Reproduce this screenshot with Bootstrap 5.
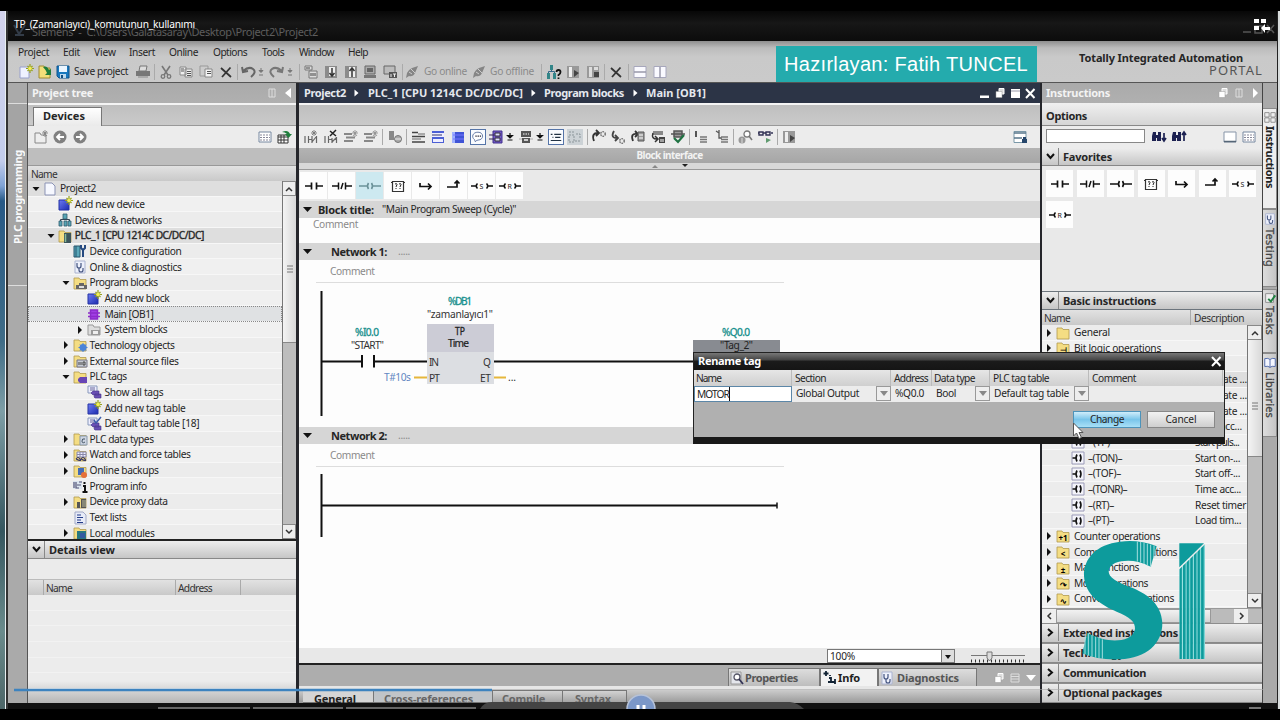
<!DOCTYPE html>
<html lang="en">
<head>
<meta charset="utf-8">
<meta name="viewport" content="width=device-width, initial-scale=1">
<title>TIA Portal - Project2</title>
<link href="https://cdn.jsdelivr.net/npm/bootstrap@5.3.0/dist/css/bootstrap.min.css" rel="stylesheet">
<style>
body{width:1280px;height:720px;overflow:hidden;background:#000;font-family:"Noto Sans","Open Sans",sans-serif;font-size:10.2px;line-height:15px;color:#262626}
span,b{white-space:nowrap}
svg{flex:none;display:block}
.ic{width:16px;height:16px}
.screen{height:698px;margin-top:11px}
.screen .caption-bar,.screen .strip,.screen .tools,.screen .acc,.title-bar,.top-menu,.taskline,.col-head,.tree{flex-shrink:0}
.desk{width:5px;background:linear-gradient(#d3d3ec,#c3cdec 150px,#7fa3d6 175px,#275986 190px,#3f6c87 330px,#7e9ea6 400px,#35565f 520px,#6a8b8c 620px,#4d6668)}
.frame-l{width:3px;background:linear-gradient(90deg,#e8eef0 0 1px,#333 1px)}
.frame-r{width:3px;background:linear-gradient(90deg,#222 0 1px,#d8dcdc 1px)}
.title-bar{height:30px;background:linear-gradient(#070707,#171717 12px,#0c0c0c);color:#5d5d5d;font-size:11px}
.top-menu{height:42px;background:linear-gradient(#8f8f8f,#bcbcbc 7px,#c9c9c9 16px,#cacaca);border-bottom:1px solid #555}
.menu-row{height:21px;line-height:22px}
.credit{left:776px;top:46px;width:261px;height:36px;background:#24abad;color:#fff;font:20px/36px "Liberation Sans",Arial,sans-serif;padding-left:8px}
.side-l{width:20px;background:#aaa;border-right:1px solid #555}
.side-l .slot{height:183px;margin-top:20px;border-top:1px solid #ddd;border-bottom:1px solid #ddd;background:#a4a4a4}
.vert{writing-mode:vertical-rl;line-height:14px}
.flip{transform:rotate(180deg)}
.proj{width:268px}
.vline{width:3px;background:#25262b}
.caption-bar{height:20px;background:linear-gradient(#aaa,#b0b0b0);color:#f3f3f3;font-weight:700;line-height:20px;font-size:11px}
.caption-bar.dark{background:#2c3446;color:#e5e8ee}
.strip{height:23px;border-top:2px solid #f4f4f4;background:linear-gradient(#bfbfbf,#cacaca);border-bottom:1px solid #999}
.dev-tab{width:69px;height:19px;margin-left:5px;border:1px solid #777;border-bottom:0;background:linear-gradient(#fff,#eaeaea);line-height:16px;font-size:11px;margin-bottom:-1px;padding-right:7px}
.tools{height:22px;background:#ececec}
.spacer-bar{height:18px;background:#bebebe;border-bottom:1px solid #999}
.col-head{height:15px;background:linear-gradient(#e2e2e2,#c9c9c9);color:#333;line-height:16px}
.tree{height:358px;background:#f0f0f0}
.tree-row{height:15.66px;line-height:15px;border-bottom:1px solid #f7f7f7;padding-top:1px}
.tree-row:nth-child(odd){background:#ececec}
.tree-row.hd{background:#dedede!important}
.tree-row.sel{background:#dfe1e3!important;outline:1px dotted #888;outline-offset:-1px}
.scr{width:14px;background:#bdbdbd;border-left:1px solid #777}
.scr .sb{height:15px;background:#eee;border:1px solid #888;border-left:0;display:flex;align-items:center;justify-content:center}
.scr .th{background:linear-gradient(90deg,#f4f4f4,#d8d8d8);border-bottom:1px solid #888;display:flex;align-items:center;justify-content:center}
.acc{height:18px;background:linear-gradient(#ededed,#c6c6c6);border-bottom:1px solid #888;font-weight:700;font-size:11px;line-height:18px}
.acc .chev{width:17px;height:17px;border-right:1px solid #888;display:flex;align-items:center;justify-content:center;margin-right:4px;flex:none}
.details{background:linear-gradient(#ececec 0 86px,#b5b5b5 108px)}
.editor{width:741px;background:#fdfdfd}
.bi{height:15px;background:linear-gradient(#b3b3b3,#a6a6a6);color:#f2f2f2;line-height:15px;font-size:10px;font-weight:700}
.fav{background:#e9e9e9}
.fav-cell{width:27px;height:27px;background:#fdfdfd;display:flex;align-items:center;justify-content:center}
.fav-cell.on{background:#cde9f0}
.net{height:17px;background:#d6d6d6;font-weight:700;line-height:17px;font-size:11px}
.net .fw-normal{font-size:10.2px}
.faint{color:#8a8a8a}
.instr{width:220px}
.side-r{width:15px;background:#aaa;border-left:1px solid #444}
.side-r .vert{font-size:11px}
.vtab{background:linear-gradient(90deg,#ddd,#c5c5c5);border:1px solid #8a8a8a;border-left:0;color:#444}
.vtab.on{background:#eee;color:#222}
.ibtn{border:1px solid #5574a8;background:#fafcff}
.insp{height:38px;background:#adadad;font-size:11px}
.itab{height:18px;background:linear-gradient(#ddd,#bdbdbd);border:1px solid #777;border-bottom:0;color:#555;font-weight:700;line-height:17px}
.itab.on{background:#f2f2f2;color:#222}
.subtabs{height:17px;border-top:4px solid #e6e6e6;background:linear-gradient(#ccc,#999);overflow:hidden}
.stab{height:13px;border:1px solid #777;border-left:0;background:linear-gradient(#d2d2d2,#a5a5a5);font-weight:700;color:#666;line-height:15px}
.taskline{height:6px;background:#111}
.dlg{left:693px;top:352px;width:532px;height:92px;background:#b0b0b0;border:1px solid #222;border-bottom:7px solid #191919}
.dlg-title{height:17px;background:linear-gradient(#777,#444 7px,#1b1b1b 8px,#151515);color:#fff;font-weight:700;line-height:16px;font-size:11px}
.dlg-head{height:16px;background:linear-gradient(#e6e6e6,#cfcfcf);line-height:16px}
.dlg-head>div{border-right:1px solid #bbb}
.dlg-row{height:16px;background:#ececec;line-height:15px}
.dd{width:15px;height:15px;border:1px solid #999;background:#eee;display:flex;align-items:center;justify-content:center}
.in{background:#fff;border:1px solid #5c87a8}
.dbtn{width:68px;height:17px;border:1px solid #888;background:linear-gradient(#f2f2f2,#cfcfcf);line-height:15px;text-align:center}
.dbtn.pri{background:linear-gradient(#cfedfb,#79c5ea 50%,#a9e0f7);border-color:#4d93ba}
.ov{pointer-events:none}
</style>
</head>
<body class="position-relative">
<svg width="0" height="0" class="position-absolute"><defs>
<linearGradient id="gb" x1="0" x2="1" y1="0" y2="1"><stop stop-color="#6d7cf0"/><stop offset="1" stop-color="#1c2bb0"/></linearGradient>
<symbol id="page" viewBox="0 0 16 16"><path d="M3 2h7l3 3v9H3z" fill="#f6f8ff" stroke="#8b93b5"/></symbol>
<symbol id="star" viewBox="0 0 16 16"><path d="M12 0v9M8 4.500h8M9.500 2l5 5M14.500 2l-5 5" stroke="#98a21d" stroke-width="1.200"/><circle cx="12" cy="4.500" r="1.800" fill="#f2ee55"/></symbol>
<symbol id="newp" viewBox="0 0 16 16"><path d="M2 3h9v11H2z" fill="#eef1ff" stroke="#98a0cc"/><use href="#star"/></symbol>
<symbol id="open" viewBox="0 0 16 16"><path d="M2 2h5l1 2h5v10H2z" fill="#f3df79" stroke="#a08c34"/><path d="M6 3q4-2 6 3l2-1v6H8l2-2Q9 6 6 3" fill="#1f7d3c"/></symbol>
<symbol id="save" viewBox="0 0 16 16"><path d="M2 2h12v12H4l-2-2z" fill="#1878be" stroke="#0f558d"/><path d="M4 2h8v6H4z" fill="#eaf5ff"/><path d="M5 10h6v4H5z" fill="#bcd9ee"/><path d="M6 11h2v3H6z" fill="#114d80"/></symbol>
<symbol id="print" viewBox="0 0 16 16"><path d="M5 2h7l-1 5H4z" fill="#ddd" stroke="#777"/><path d="M1 7h14v5H1z" fill="#777"/><path d="M3 12h10v2H3z" fill="#aaa"/></symbol>
<symbol id="cut" viewBox="0 0 16 16"><path d="M4 2l6 9M12 2l-6 9" stroke="#777" stroke-width="1.600"/><circle cx="5" cy="12.500" r="1.800" fill="none" stroke="#777" stroke-width="1.300"/><circle cx="11" cy="12.500" r="1.800" fill="none" stroke="#777" stroke-width="1.300"/></symbol>
<symbol id="copy" viewBox="0 0 16 16"><path d="M2 3h6v8H2zM7 5h7v8H7z" fill="#eee" stroke="#888"/><path d="M3 5h3M3 7h3M9 7.500h4M9 9.500h4M9 11.500h4" stroke="#555"/></symbol>
<symbol id="paste" viewBox="0 0 16 16"><path d="M2 2h8v10H2z" fill="#ccc" stroke="#999"/><path d="M7 5h7v8H7z" fill="#f4f4f4" stroke="#888"/><path d="M9 7.500h4M9 9.500h4" stroke="#555"/></symbol>
<symbol id="del" viewBox="0 0 16 16"><path d="M3 4l10 9M12.500 3.500L4 13" stroke="#333" stroke-width="1.800"/></symbol>
<symbol id="undo" viewBox="0 0 16 16"><path d="M2 3l1 5 5-1M3 7q6-5 10-2t-2 8" fill="none" stroke="#666" stroke-width="2"/></symbol>
<symbol id="redo" viewBox="0 0 16 16"><path d="M14 3l-1 5-5-1M13 7Q7 2 3 5t2 8" fill="none" stroke="#777" stroke-width="2"/></symbol>
<symbol id="dn" viewBox="0 0 16 16"><path d="M8 4v4M5.500 6.500L8 9l2.500-2.500zM5.500 11h5" stroke="#111" fill="#111" stroke-width="1.200"/></symbol>
<symbol id="dng" viewBox="0 0 16 16"><path d="M8 4v4M6 6.500L8 8.500l2-2zM6 11h4" stroke="#777" fill="#777"/></symbol>
<symbol id="comp" viewBox="0 0 16 16"><path d="M2 2h7v4H2zM6 7h8v7H6z" fill="#ddd" stroke="#777"/><path d="M3 4h4M8 9v3M10 9v3M12 9v3" stroke="#444"/></symbol>
<symbol id="down" viewBox="0 0 16 16"><path d="M2 2h12v12H2z" fill="#8b8b8b"/><path d="M6 3h6v9H6z" fill="#eee"/><path d="M9 4v7M6.500 9L9 12l2.500-3" stroke="#333" fill="none" stroke-width="1.500"/></symbol>
<symbol id="up" viewBox="0 0 16 16"><path d="M2 2h12v12H2z" fill="#8b8b8b"/><path d="M6 3h6v10H6z" fill="#eee"/><path d="M9 13V5M6.500 7L9 4l2.500 3" stroke="#333" fill="none" stroke-width="1.500"/></symbol>
<symbol id="sim" viewBox="0 0 16 16"><path d="M3 2h10v8H3z" fill="#aaa" stroke="#666"/><path d="M5 4h6v4H5z" fill="#666"/><path d="M2 11h12v3H2z" fill="#777"/></symbol>
<symbol id="rt" viewBox="0 0 16 16"><path d="M2 2h11v8H2z" fill="#bbb" stroke="#666"/><path d="M7 8h8v6H7z" fill="#555"/><path d="M9 10v3M11 10h3M12.500 10v3" stroke="#eee"/></symbol>
<symbol id="plug" viewBox="0 0 16 16"><path d="M2 14l1-5q1-3 5-5l6-2-3 7q-2 4-6 3z" fill="#858585"/><path d="M7 5l4 4M5 8l3 2" stroke="#ccc"/></symbol>
<symbol id="acc" viewBox="0 0 16 16"><path d="M4 1h3v5H4zM1 9h3v6H1zM7 9h3v6H7z" fill="#328588"/><path d="M5.500 6v2M2.500 9V7.500h6V9" stroke="#368" fill="none"/><path d="M10.500 8q0-2 2-2t2 2-2 3v1M12.500 13.500V15" stroke="#111" fill="none" stroke-width="1.800"/></symbol>
<symbol id="win" viewBox="0 0 16 16"><path d="M2 2h12v12H2z" fill="#999"/><path d="M4 3h3v10H4z" fill="#eee"/><path d="M9 6l5 3-5 4z" fill="#444"/></symbol>
<symbol id="win2" viewBox="0 0 16 16"><path d="M2 2h12v12H2z" fill="#999"/><path d="M4 3h3v10H4zM9 3h4v3H9z" fill="#ddd"/><path d="M9 8h5v5H9z" fill="#444"/></symbol>
<symbol id="sph" viewBox="0 0 16 16"><path d="M2 2.500h12v11H2z" fill="#fafaff" stroke="#a7a7bc"/><path d="M2 8h12" stroke="#99a" stroke-width="1.500"/></symbol>
<symbol id="spv" viewBox="0 0 16 16"><path d="M2 2.500h12v11H2z" fill="#fafaff" stroke="#a7a7bc"/><path d="M8 3v11" stroke="#99a" stroke-width="1.500"/></symbol>
<symbol id="grid" viewBox="0 0 16 16"><path d="M2 3h12v10H2z" fill="#fff" stroke="#7788a0"/><path d="M3 6h10M3 8.500h10M3 11h10" stroke="#889" stroke-dasharray="2 1"/></symbol>
<symbol id="pane" viewBox="0 0 16 16"><path d="M2 3h12v10H2z" fill="#fff" stroke="#8795a8"/><path d="M2 12.500h12" stroke="#567" stroke-width="1.500"/></symbol>
<symbol id="paned" viewBox="0 0 16 16"><path d="M2 2.500h12v11H2z" fill="#fff" stroke="#7a98a8"/><path d="M2 4h12M2 9h8" stroke="#57768a" stroke-width="1.500"/><path d="M10 10h5v4h-5zM11 8h3v2h-3z" fill="#26466b"/></symbol>
<symbol id="exp" viewBox="0 0 16 16"><path d="M2 6h10v8H2z" fill="#fff" stroke="#333"/><path d="M2 8h10M2 11h10M5 6v8M8 6v8" stroke="#333"/><path d="M6 3q6-3 8 2h2l-3.500 4L9 5h2Q9 3 6 3" fill="#1f7d3c"/></symbol>
<symbol id="newg" viewBox="0 0 16 16"><path d="M2 4h5l1 2h5v8H2z" fill="#eee" stroke="#888"/><path d="M12 1v7M9 4h6M10 2l4 5M14 2l-4 5" stroke="#777" stroke-width=".8"/></symbol>
<symbol id="back" viewBox="0 0 16 16"><circle cx="8" cy="8" r="6.500" fill="#808080"/><path d="M12 8H5M8 5L5 8l3 3" stroke="#fff" stroke-width="1.800" fill="none"/></symbol>
<symbol id="fwd" viewBox="0 0 16 16"><circle cx="8" cy="8" r="6.500" fill="#808080"/><path d="M4 8h7M8 5l3 3-3 3" stroke="#fff" stroke-width="1.800" fill="none"/></symbol>
<symbol id="add" viewBox="0 0 16 16"><path d="M2 4h10v10H2z" fill="url(#gb)" stroke="#2433a5"/><use href="#star"/></symbol>
<symbol id="neti" viewBox="0 0 16 16"><path d="M6 2h4v5H6zM2 9h3v5H2zM7 9h3v5H7zM11 9h3v5h-3z" fill="#59a5b5" stroke="#345e70" stroke-width=".8"/><path d="M3.500 9V7.500h9V9" fill="none" stroke="#345"/></symbol>
<symbol id="fold" viewBox="0 0 16 16"><path d="M2 3h5l1 1.500h6V14H2z" fill="#f4dd83" stroke="#b19a4e" stroke-width=".8"/></symbol>
<symbol id="plc" viewBox="0 0 16 16"><use href="#fold"/><path d="M7 5h7v10H7z" fill="#3c555b"/><path d="M8.500 6v8" stroke="#8b9" stroke-width="1.500"/></symbol>
<symbol id="cfg" viewBox="0 0 16 16"><path d="M2 3h6v11H2z" fill="#5aa8ba" stroke="#27576e"/><path d="M4 3v11" stroke="#27576e"/><path d="M9 2v3l2 2v7M13 2v3l-2 2" stroke="#264a80" stroke-width="2" fill="none"/></symbol>
<symbol id="diag" viewBox="0 0 16 16"><path d="M3 2h10v12H3z" fill="#edf0fb" stroke="#aab3d0"/><path d="M5 4v3q0 2 2 2t2-2V4M7 9v2q0 2 2 2t2-2V9" fill="none" stroke="#445580" stroke-width="1.200"/></symbol>
<symbol id="fpb" viewBox="0 0 16 16"><use href="#fold"/><path d="M4 10h11v4H4zM7 8h5v2H7z" fill="#666"/><path d="M7 11h5v2H7z" fill="#ddd"/></symbol>
<symbol id="ob" viewBox="0 0 16 16"><path d="M4.500 4h7v9h-7zM2 7h12M2 10.500h12" fill="#a23ee6" stroke="#8b2bc9" stroke-width="1.500"/></symbol>
<symbol id="sys" viewBox="0 0 16 16"><path d="M2 3h5l1 2h6v8H2z" fill="#ddd" stroke="#999"/><path d="M5 8h9v5H5z" fill="#999"/><path d="M7 9h5v3H7z" fill="#eee"/></symbol>
<symbol id="tech" viewBox="0 0 16 16"><use href="#fold"/><circle cx="11" cy="10.500" r="3.500" fill="#4a83d8"/><path d="M11 6v9M6.500 10.500h9M8 7.500l6 6M14 7.500l-6 6" stroke="#4a83d8"/></symbol>
<symbol id="ext" viewBox="0 0 16 16"><use href="#fold"/><path d="M5 7h10v7H5z" fill="#c8ccd4" stroke="#778"/><path d="M7 9v3M9 9v3M11 9h2v3h-2z" stroke="#444" fill="none"/></symbol>
<symbol id="tags" viewBox="0 0 16 16"><use href="#fold"/><path d="M6 10l2-2h7v6H8l-2-2z" fill="#6745b5"/></symbol>
<symbol id="tagt" viewBox="0 0 16 16"><path d="M2 2h9v7H2z" fill="#eef" stroke="#89b"/><path d="M4 4h5M4 6h5" stroke="#669"/><path d="M5 9l2-2h6v4H7zM8 13l1-3h6v4H9z" fill="#6a50b5" stroke="#453387" stroke-width=".6"/></symbol>
<symbol id="tagd" viewBox="0 0 16 16"><use href="#tagt"/><path d="M8 4l2 3 5-6" stroke="#3e5daa" fill="none" stroke-width="1.500"/></symbol>
<symbol id="dty" viewBox="0 0 16 16"><use href="#fold"/><path d="M8 5h7v9H8z" fill="#cdd5e2" stroke="#89a"/><path d="M13 8q-3-1-3 2t3 1" stroke="#456" fill="none"/></symbol>
<symbol id="watch" viewBox="0 0 16 16"><use href="#fold"/><path d="M5 5h9v5H5z" fill="#eef" stroke="#88a"/><path d="M5 7.500h9M8 5v5M11 5v5" stroke="#88a"/><path d="M4 12q2-3 4 0t-4 0M9 12q2-3 4 0t-4 0" fill="none" stroke="#336" stroke-width="1.200"/></symbol>
<symbol id="bak" viewBox="0 0 16 16"><use href="#fold"/><path d="M6 5h6v7H6z" fill="#456bb5"/><circle cx="12" cy="12" r="3" fill="#e5703a"/></symbol>
<symbol id="info" viewBox="0 0 16 16"><path d="M1 3h9v8H1z" fill="#dbe5ef"/><path d="M2 4v6M4 4v6h3M7 4h3M5 7h4" stroke="#557" stroke-width="1.200" fill="none"/><path d="M12.500 4v2M11 8h2v6M10.500 14h5" stroke="#111" stroke-width="2" fill="none"/></symbol>
<symbol id="proxy" viewBox="0 0 16 16"><use href="#fold"/><path d="M5 8h3v6H5zM9 5h5v9H9z" fill="#555"/><path d="M11 6v7M13 6v7" stroke="#bb9"/></symbol>
<symbol id="txt" viewBox="0 0 16 16"><path d="M3 2h8l3 3v9H3z" fill="#e7ebf8" stroke="#a0a8c5"/><path d="M5 5h4M5 7.500h6M5 10h4M5 12.500h6" stroke="#223a88" stroke-width="1.200"/></symbol>
<symbol id="lmod" viewBox="0 0 16 16"><use href="#fold"/><path d="M5 6h9v9H5z" fill="#287781"/><path d="M8 8h5v5H8z" fill="#335aa0"/></symbol>
<symbol id="ins" viewBox="0 0 16 16"><path d="M2 7v7M5.500 7v7M5.500 10.500h3M9 7v7M13.500 7v7M9 13l4-5" stroke="#666" stroke-width="1.200"/><path d="M8 4h6M11 1v6M9 2l4 4M13 2L9 6" stroke="#777" stroke-width=".9"/></symbol>
<symbol id="rem" viewBox="0 0 16 16"><path d="M2 7v7M5.500 7v7M5.500 10.500h3M9 9v5M13.500 8v6M9 13l4-4" stroke="#666" stroke-width="1.200"/><path d="M7 2l6 5M13 1L7 7" stroke="#222" stroke-width="1.500"/></symbol>
<symbol id="row" viewBox="0 0 16 16"><path d="M1 5h8M3 8.500h9M1 12h9" stroke="#888" stroke-width="1.800"/><path d="M12 1v7M9 4h6M10 2l4 5M14 2l-4 5" stroke="#888" stroke-width=".8"/></symbol>
<symbol id="cube" viewBox="0 0 16 16"><path d="M2 2h5v9H2z" fill="#888"/><circle cx="11" cy="10" r="3.500" fill="#aaa" stroke="#777"/><path d="M8 10h6" stroke="#eee"/></symbol>
<symbol id="ln" viewBox="0 0 16 16"><path d="M1 3.500h6M1 7.500h13M1 13h13" stroke="#444" stroke-width="1.400"/><path d="M7 5h7M1 10h9" stroke="#666"/></symbol>
<symbol id="nb" viewBox="0 0 16 16"><path d="M2 2h12v12H2z" fill="#4b5fd5"/><path d="M2 4h12v4H2zM3 10h10v3H3z" fill="#eef"/><path d="M2 6h10" stroke="#336"/></symbol>
<symbol id="nc" viewBox="0 0 16 16"><path d="M2 3h12v11H2z" fill="#4054d6"/><path d="M2 3h3v11H2z" fill="#9eb0ff"/><path d="M3 6h11M3 10h11" stroke="#77f"/></symbol>
<symbol id="cmt" viewBox="0 0 16 16"><path d="M8 2.500c7 0 7 9 0 9q-2 0-3 2l-1-2.500c-4-3-2-8.500 4-8.500z" fill="#fff" stroke="#556b9a"/><path d="M5 7h1.500M7.500 7H9M10 7h1.500" stroke="#223" stroke-width="1.500"/></symbol>
<symbol id="oper" viewBox="0 0 16 16"><path d="M5 2h9v12H5z" fill="#7157c5" stroke="#43338d"/><path d="M7 4h5v3H7zM7 9h5v3H7z" fill="#ddf" stroke="#333"/><path d="M1 6h5M1 10h5" stroke="#325"/></symbol>
<symbol id="abs" viewBox="0 0 16 16"><path d="M3 2h10v6H3zM4 9h8v5H4z" fill="#555"/><path d="M5 5h6" stroke="#fff" stroke-dasharray="1.500 1"/><path d="M6 11h4M1 10h3M12 10h3" stroke="#ccc" stroke-width="2"/></symbol>
<symbol id="lst" viewBox="0 0 16 16"><path d="M2 5h2M6 5h8M2 12h12M4 8.500h1M7 8.500h6" stroke="#234" stroke-width="1.300"/></symbol>
<symbol id="lsg" viewBox="0 0 16 16"><path d="M0 0h16v16H0z" fill="#ccd2d6"/><path d="M2 3h5M2 6h5v7H2zM9 5h4v5M8 12h6" stroke="#8a9499" fill="none" stroke-dasharray="2 1"/></symbol>
<symbol id="gear1" viewBox="0 0 16 16"><path d="M3 12Q0 4 7 4M5 1l3 3-3 3" fill="none" stroke="#333" stroke-width="1.800"/><circle cx="12" cy="5" r="2.300" fill="none" stroke="#777" stroke-dasharray="1.500 .8" stroke-width="1.500"/></symbol>
<symbol id="gear2" viewBox="0 0 16 16"><path d="M4 2Q0 9 7 9M5 6l3 3-3 3" fill="none" stroke="#444" stroke-width="1.800"/><circle cx="12" cy="12" r="2.300" fill="none" stroke="#777" stroke-dasharray="1.500 .8" stroke-width="1.500"/></symbol>
<symbol id="st1" viewBox="0 0 16 16"><path d="M3 12Q0 4 7 5M5 2l3 3-3 3" fill="none" stroke="#333" stroke-width="1.800"/><path d="M8 3h6v9H8z" fill="#999" stroke="#555"/><path d="M9 6h4M9 9h4" stroke="#fff"/></symbol>
<symbol id="st2" viewBox="0 0 16 16"><path d="M3 2h10v4H3z" fill="#888"/><path d="M3 4Q1 10 7 10M5 7l3 3-3 3" fill="none" stroke="#333" stroke-width="1.500"/><path d="M9 8h6v6H9z" fill="#444"/><path d="M11 10v3M13 10v3" stroke="#fff"/></symbol>
<symbol id="chk" viewBox="0 0 16 16"><path d="M4 2h8v6H4zM1 5h14" fill="#999" stroke="#555" stroke-width="1.500"/><path d="M4 9l4 4 6-7" fill="none" stroke="#1f7242" stroke-width="2.200"/></symbol>
<symbol id="l1" viewBox="0 0 16 16"><path d="M3 2v6" stroke="#444" stroke-width="1.800"/><path d="M7 8h7M7 10.500h7M7 13h7" stroke="#777" stroke-width="1.300"/></symbol>
<symbol id="l2" viewBox="0 0 16 16"><path d="M2 2l3 2v5h3M5 1v3" fill="none" stroke="#555" stroke-width="1.300"/><path d="M7 8h7M7 10.500h7M7 13h7" stroke="#777" stroke-width="1.300"/></symbol>
<symbol id="mag" viewBox="0 0 16 16"><circle cx="10" cy="5" r="3" fill="#fff" stroke="#777" stroke-width="1.300"/><path d="M12 7l3 4" stroke="#777" stroke-width="1.500"/><circle cx="5" cy="11" r="3.500" fill="#999"/><path d="M5 9v5" stroke="#ddd"/></symbol>
<symbol id="prop" viewBox="0 0 16 16"><path d="M2 2h10v12H2z" fill="#e4e6ec" stroke="#999"/><circle cx="8" cy="7" r="3" fill="#fff" stroke="#556" stroke-width="1.300"/><path d="M10 9l4 5" stroke="#335" stroke-width="1.800"/></symbol>
<symbol id="glas" viewBox="0 0 16 16"><path d="M1 4h1M14 4h2M2 3h4v3H2zM9 3h4v3H9zM6 4h3" stroke="#335" fill="none" stroke-width="1.400"/><path d="M9 9l5 2-5 3z" fill="#609b70"/></symbol>
<symbol id="bin" viewBox="0 0 16 16"><path d="M2 3h3v3h2V3h3v9H6V9H5v3H1V7z" fill="#1d2252"/><path d="M13 4v8M11 9l2 3 2-3" stroke="#1d2252" stroke-width="1.700" fill="none"/></symbol>
<symbol id="binu" viewBox="0 0 16 16"><path d="M2 3h3v3h2V3h3v9H6V9H5v3H1V7z" fill="#1d2252"/><path d="M13 12V3M11 6l2-3 2 3" stroke="#1d2252" stroke-width="1.700" fill="none"/></symbol>
<symbol id="rest" viewBox="0 0 16 16"><path d="M7 3.500h5V9H7z" fill="#ddd" stroke="#fff"/><path d="M4 6.500h6v6H4z" fill="#fff" stroke="#999" stroke-width=".5"/></symbol>
<symbol id="pin" viewBox="0 0 16 16"><path d="M5 4h6v8H5zM8 4v8" fill="none" stroke="#ddd"/></symbol>
<symbol id="mlist" viewBox="0 0 16 16"><path d="M4 4h8v8H4zM4 6.500h8M4 9h8" fill="none" stroke="#ddd"/></symbol>
<symbol id="tl" viewBox="0 0 16 16"><path d="M11 3v10L5 8z" fill="#fff"/></symbol>
<symbol id="tr" viewBox="0 0 16 16"><path d="M6 3v10l5-5z" fill="#fff"/></symbol>
<symbol id="sep" viewBox="0 0 16 16"><path d="M6.500 4.500v7l4-3.500z" fill="#fff"/></symbol>
<symbol id="td" viewBox="0 0 16 16"><path d="M3 5h10l-5 6z" fill="#fff"/></symbol>
<symbol id="wmin" viewBox="0 0 16 16"><path d="M4 10.500h9v2.500H4z" fill="#fff"/></symbol>
<symbol id="wmax" viewBox="0 0 16 16"><path d="M4 4h9v9H4z" fill="#fff"/><path d="M4 6h9" stroke="#99a"/></symbol>
<symbol id="wx" viewBox="0 0 16 16"><path d="M4 4l8.500 9M12.500 4L4 13" stroke="#fff" stroke-width="2"/></symbol>
<symbol id="coil" viewBox="0 0 16 16"><path d="M2 2h12v12H2z" fill="#f4f4fa" stroke="#9a9ab8"/><path d="M2.500 8h4M7 4.500q-2 3.500 0 7M10 4.500q2 3.500 0 7" stroke="#111" stroke-width="1.600" fill="none"/></symbol>
<symbol id="k1" viewBox="0 0 20 16"><path d="M1 8h6M7.500 4.500v7M12.500 4.500v7M13 8h6" stroke="#111" stroke-width="1.700"/></symbol>
<symbol id="k2" viewBox="0 0 22 16"><path d="M1 8h6M7.500 4.500v7M14.500 4.500v7M15 8h6M10 11l2-6" stroke="#111" stroke-width="1.500"/></symbol>
<symbol id="k3" viewBox="0 0 24 16"><path d="M1 8h8M10.500 5q-2 3 0 6M13.500 5q2 3 0 6M15 8h8" stroke="currentColor" stroke-width="1.600" fill="none"/></symbol>
<symbol id="k4" viewBox="0 0 16 16"><path d="M2.500 3.500h11v10h-11zM1 4.500h2M13 4.500h2" fill="none" stroke="#333" stroke-width="1.200"/><path d="M5 6q2-1 2 .5L6 9M6 10v1M9 6q2-1 2 .5L10 9M10 10v1" stroke="#222" fill="none"/></symbol>
<symbol id="k5" viewBox="0 0 16 16"><path d="M2 5v3.500h11M10 5.500l3 3-3 3" fill="none" stroke="#111" stroke-width="1.700"/></symbol>
<symbol id="k6" viewBox="0 0 16 16"><path d="M1 9h10V3M8.500 5.500L11 3l2.500 2.500" fill="none" stroke="#111" stroke-width="1.700"/></symbol>
<symbol id="bm" viewBox="0 0 16 16"><path d="M2 3h5v5H2zM9 3h5v5H9zM2 9h5v5H2zM9 9h5v5H9z" fill="#eee" stroke="#888"/></symbol>
<symbol id="book" viewBox="0 0 16 16"><path d="M2 3q4-1 6 1 2-2 6-1v9q-4-1-6 1-2-2-6-1zM8 4v9" fill="#f4f6ff" stroke="#445fa5"/></symbol>
<symbol id="task" viewBox="0 0 16 16"><path d="M3 3h9v10H3z" fill="#eee" stroke="#888"/><path d="M6 9l3 3 5-7" fill="none" stroke="#1f8242" stroke-width="2.200"/></symbol>
</defs></svg>

<main class="screen d-flex">
  <div class="desk"></div><div class="frame-l"></div>
  <div class="d-flex flex-column flex-grow-1" style="min-width:0">
    <header class="title-bar d-flex align-items-end">
      <svg class="ms-1 mb-1" width="16" height="14"><path d="M2 2l5 9 6-9M3 12h9" stroke="#333c48" stroke-width="2" fill="none"/></svg>
      <span class="ms-1 mb-0" style="line-height:19px" data-w="286">Siemens &nbsp;- &nbsp;C:\Users\Galatasaray\Desktop\Project2\Project2</span>
      <svg class="ms-auto mb-1" width="36" height="14"><path d="M2 9h8M26 2l7 8M33 2l-7 8M14 3h7v7h-7z" stroke="#555" fill="none" stroke-width="1.500"/></svg>
    </header>
    <div class="top-menu d-flex justify-content-between">
      <div>
        <nav class="menu-row d-flex" id="menu"></nav>
        <div class="d-flex align-items-center" id="mainTools" style="height:19px"></div>
      </div>
      <div class="text-end" style="padding-right:14px">
        <div style="line-height:14px;padding:10px 20px 0 0;font-size:11px"><b data-w="164">Totally Integrated Automation</b></div>
        <div style="line-height:11px;font-size:13px;color:#555"><span data-w="54">PORTAL</span></div>
      </div>
    </div>
    <div class="d-flex flex-grow-1">
      <aside class="side-l"><div class="slot d-flex justify-content-center align-items-end"><b class="vert flip text-light" style="margin-bottom:41px;font-size:11px" data-h="94">PLC programming</b></div></aside>
      <section class="proj d-flex flex-column">
        <div class="caption-bar d-flex align-items-center ps-1"><span data-w="61">Project tree</span><svg class="ic ms-auto"><use href="#pin"/></svg><svg class="ic"><use href="#tl"/></svg></div>
        <div class="strip d-flex align-items-end"><div class="dev-tab text-center fw-bold"><span data-w="42">Devices</span></div></div>
        <div class="tools d-flex align-items-center" id="projTools"></div>
        <div class="spacer-bar"></div>
        <div class="col-head d-flex"><span style="padding-left:3px" data-w="26">Name</span></div>
        <div class="tree d-flex overflow-hidden">
          <div class="flex-grow-1" id="tree"></div>
          <div class="scr d-flex flex-column"><div class="sb"><svg width="8" height="6"><path d="M1 5l3-3 3 3" fill="none" stroke="#333" stroke-width="1.500"/></svg></div><div class="th" style="height:147px"><svg width="6" height="8"><path d="M0 1h6M0 4h6M0 7h6" stroke="#777"/></svg></div><div class="sb mt-auto"><svg width="8" height="6"><path d="M1 1l3 3 3-3" fill="none" stroke="#333" stroke-width="1.500"/></svg></div></div>
        </div>
        <div style="height:2px;background:#222"></div>
        <div class="acc d-flex"><div class="chev"><svg width="9" height="7"><path d="M1 1l3.500 4L8 1" fill="none" stroke="#111" stroke-width="2"/></svg></div><span data-w="66">Details view</span></div>
        <div style="height:21px;background:#ebebeb;border-bottom:1px solid #bbb"></div>
        <div class="col-head d-flex"><div style="width:16px;border-right:1px solid #aaa"></div><div style="width:132px;border-right:1px solid #aaa;padding-left:2px"><span data-w="26">Name</span></div><div style="width:65px;border-right:1px solid #aaa;padding-left:2px"><span data-w="34">Address</span></div></div>
        <div class="details flex-grow-1" id="details"></div>
      </section>
      <div class="vline"></div>
      <section class="editor d-flex flex-column">
        <div class="caption-bar dark d-flex align-items-center" id="crumb"></div>
        <div class="strip"></div>
        <div class="tools d-flex align-items-center" id="edTools"></div>
        <div class="bi text-center"><span data-w="66">Block interface</span></div>
        <div style="height:7px;background:#d8d8d8;border-bottom:1px solid #999" class="d-flex justify-content-center"><svg width="60" height="6"><path d="M12 5l3-3 3 3z" fill="#888"/><path d="M42 1h6l-3 3z" fill="#222"/></svg></div>
        <div class="fav d-flex align-items-center" style="height:31px;padding-left:1px;gap:1px" id="fav1"></div>
        <div class="net d-flex align-items-center"><svg width="14" height="8"><path d="M4 1h9L8.500 6z" fill="#111"/></svg><span style="margin-left:5px" data-w="56">Block title:</span><span class="fw-normal" style="margin-left:8px" data-w="134">"Main Program Sweep (Cycle)"</span></div>
        <div class="faint" style="height:25px;padding-left:14px;line-height:13px"><span data-w="45">Comment</span></div>
        <div class="net d-flex align-items-center"><svg width="14" height="8"><path d="M4 1h9L8.500 6z" fill="#111"/></svg><span style="margin-left:18px" data-w="56">Network 1:</span><span class="faint fw-normal" style="margin-left:11px" data-w="12">.....</span></div>
        <svg width="741" height="167" viewBox="299 260 741 167" font-family="Noto Sans" font-size="10.200" fill="#333">
          <text x="330" y="275" fill="#8a8a8a" textLength="45">Comment</text>
          <path d="M316 282.500H784" stroke="#ddd"/>
          <path d="M321.500 291V416M321 361.500H362M374 361.500H427M494 361.500H778" stroke="#111" stroke-width="2"/>
          <path d="M362 355v12.500M374 355v12.500" stroke="#111" stroke-width="2"/>
          <text x="355" y="336" fill="#168f8c" stroke="#168f8c" stroke-width=".3" textLength="24">%I0.0</text><text x="351" y="348.500" textLength="33">"START"</text>
          <text x="448" y="305" fill="#168f8c" stroke="#168f8c" stroke-width=".3" textLength="24">%DB1</text><text x="427" y="317.500" textLength="66">"zamanlayıcı1"</text>
          <path d="M427 324h67v28h-67z" fill="#ccccd6"/><path d="M427 352h67v32h-67z" fill="#dcdee2"/>
          <text x="455" y="335" fill="#222" textLength="10" stroke="#222" stroke-width=".3" lengthAdjust="spacingAndGlyphs">TP</text><text x="448" y="347" fill="#222" textLength="21" stroke="#222" stroke-width=".2">Time</text>
          <text x="429" y="366" textLength="10">IN</text><text x="483" y="366" textLength="8">Q</text><text x="429" y="381.500" textLength="11">PT</text><text x="480" y="381.500" textLength="11">ET</text>
          <path d="M414 377.500h13M494 377.500h12" stroke="#e6b73c" stroke-width="2"/><text x="384" y="381" fill="#6387c2" textLength="27">T#10s</text><text x="508" y="381" textLength="8">...</text>
          <text x="722" y="336" fill="#168f8c" stroke="#168f8c" stroke-width=".3" textLength="28">%Q0.0</text><path d="M693 340h87v14h-87z" fill="#888b91"/><text x="720" y="349" fill="#222" textLength="33">"Tag_2"</text>
        </svg>
        <div class="net d-flex align-items-center"><svg width="14" height="8"><path d="M4 1h9L8.500 6z" fill="#111"/></svg><span style="margin-left:18px" data-w="56">Network 2:</span><span class="faint fw-normal" style="margin-left:11px" data-w="12">.....</span></div>
        <svg width="741" height="204" viewBox="299 444 741 204" font-family="Noto Sans" font-size="10.200">
          <text x="330" y="458.500" fill="#8a8a8a" textLength="45">Comment</text><path d="M316 466.500H784" stroke="#ddd"/>
          <path d="M321.500 474V537M321 505.500H777" stroke="#111" stroke-width="2"/><path d="M777 502.500v6" stroke="#111" stroke-width="1.500"/>
        </svg>
        <div class="d-flex" style="height:15px;background:#e8e8e8"><div class="d-flex bg-white justify-content-between" style="margin:1px 0 0 528px;width:128px;height:14px;border:1px solid #777;line-height:13px"><span style="padding-left:2px" data-w="25">100%</span><div style="width:13px;background:#ddd;border-left:1px solid #777"><svg width="12" height="12"><path d="M3 5h6L6 9z" fill="#111"/></svg></div></div>
          <svg width="60" height="15" style="margin-left:14px"><path d="M2 7.500h54" stroke="#777"/><path d="M2 13h54" stroke="#333" stroke-width="3" stroke-dasharray="1 3"/><path d="M18 4h5v6l-2.500 3L18 10z" fill="#ddd" stroke="#777"/></svg></div>
        <div style="height:2px;background:#222"></div>
        <div class="insp">
          <div class="d-flex align-items-end" style="height:21px;padding-left:429px">
            <div class="itab d-flex align-items-center" style="width:92px"><svg class="ic"><use href="#prop"/></svg><span data-w="53">Properties</span></div>
            <div class="itab on d-flex align-items-center" style="width:58px"><svg class="ic" style="margin-left:1px"><path d="M4 1v5M1.500 3.500h5M8 5v1M7 8h2v4M6 12h7M13 9v5" stroke="#123" stroke-width="1.800" fill="none"/></svg><span data-w="22">Info</span></div>
            <div class="itab d-flex align-items-center" style="width:99px"><svg class="ic me-1"><use href="#diag"/></svg><span data-w="62" style="margin-left:-2px">Diagnostics</span></div>
            <svg class="ic" style="margin-left:14px"><use href="#rest"/></svg><svg class="ic"><use href="#mlist"/></svg><svg class="ic"><use href="#td"/></svg>
          </div>
          <div class="subtabs d-flex" style="padding-left:4px">
            <div class="stab" style="width:71px;color:#222;padding-left:11px;background:#d5d5d5"><span data-w="42">General</span></div><div class="stab" style="width:119px;padding-left:10px;background:#c0c4c8"><span data-w="89">Cross-references</span></div><div class="stab" style="width:70px;padding-left:9px"><span data-w="43">Compile</span></div><div class="stab" style="width:64px;padding-left:12px"><span data-w="36">Syntax</span></div>
          </div>
        </div>
      </section>
      <div class="vline" style="width:2px"></div>
      <section class="instr d-flex flex-column">
        <div class="caption-bar d-flex align-items-center ps-1"><span data-w="64">Instructions</span><svg class="ic ms-auto"><use href="#rest"/></svg><svg class="ic"><use href="#pin"/></svg><svg class="ic" style="margin-right:-1px"><use href="#tr"/></svg></div>
        <div class="acc ps-1" style="height:23px;line-height:25px;background:linear-gradient(#f0f0f0,#d5d5d5)"><span data-w="41">Options</span></div>
        <div class="tools d-flex align-items-center" id="searchTools"><div class="bg-white" style="width:99px;height:14px;margin:0 0 3px 4px;border:1px solid #888"></div></div>
        <div class="acc d-flex"><div class="chev"><svg width="9" height="7"><path d="M1 1l3.500 4L8 1" fill="none" stroke="#111" stroke-width="2"/></svg></div><span data-w="49">Favorites</span></div>
        <div class="fav d-flex flex-wrap align-content-start" style="height:125px;padding:4px 0 0 4px;gap:4px 3.500px" id="fav2"></div>
        <div class="acc d-flex border-top border-secondary" style="height:19px"><div class="chev"><svg width="9" height="7"><path d="M1 1l3.500 4L8 1" fill="none" stroke="#111" stroke-width="2"/></svg></div><span data-w="93">Basic instructions</span></div>
        <div class="col-head d-flex"><div style="width:149px;border-right:1px solid #aaa;padding-left:2px"><span data-w="26">Name</span></div><span style="padding-left:3px" data-w="50">Description</span></div>
        <div class="d-flex overflow-hidden" style="height:283px;background:#f0f0f0">
          <div style="width:205px" id="instr"></div>
          <div class="scr flex-grow-1 d-flex flex-column"><div class="sb"><svg width="8" height="6"><path d="M1 5l3-3 3 3" fill="none" stroke="#333" stroke-width="1.500"/></svg></div><div class="th" style="height:117px"><svg width="6" height="8" class="mt-3"><path d="M0 1h6M0 4h6M0 7h6" stroke="#777"/></svg></div><div class="sb mt-auto"><svg width="8" height="6"><path d="M1 1l3 3 3-3" fill="none" stroke="#333" stroke-width="1.500"/></svg></div></div>
        </div>
        <div class="d-flex" style="height:15px;background:#bbb;border-top:1px solid #999"><svg width="14" height="14" style="background:#eee"><path d="M9 4L6 7l3 3" fill="none" stroke="#333" stroke-width="1.500"/></svg><div style="width:155px;background:linear-gradient(#f2f2f2,#d5d5d5);border:1px solid #999"></div><svg class="ms-auto" width="14" height="14" style="background:#eee;margin-right:14px"><path d="M6 4l3 3-3 3" fill="none" stroke="#333" stroke-width="1.500"/></svg></div>
        <div class="d-flex flex-column flex-grow-1" style="background:#8d8d8d;gap:1px;padding-top:1px" id="accs"></div>
      </section>
      <aside class="side-r">
        <div class="vtab on d-flex flex-column align-items-center" style="height:101px;margin-top:25px"><svg width="14" height="14" style="margin:1px 0 2px"><use href="#bm"/></svg><b class="vert" data-h="62">Instructions</b></div>
        <div class="vtab d-flex flex-column align-items-center" style="height:78px"><svg width="14" height="14" style="margin:2px 0"><use href="#diag"/></svg><b class="vert fw-normal" style="-webkit-text-stroke:.3px" data-h="39">Testing</b></div>
        <div class="vtab d-flex flex-column align-items-center" style="height:64px;margin-top:2px"><svg width="14" height="14" style="margin:1px 0"><use href="#task"/></svg><b class="vert fw-normal" style="-webkit-text-stroke:.3px" data-h="29">Tasks</b></div>
        <div class="vtab d-flex flex-column align-items-center" style="height:84px"><svg width="14" height="14" style="margin:2px 0"><use href="#book"/></svg><b class="vert fw-normal" style="-webkit-text-stroke:.3px" data-h="46">Libraries</b></div>
      </aside>
    </div>
    <div class="taskline"></div>
  </div>
  <div class="frame-r"></div>
</main>

<div class="position-absolute text-white" style="left:14px;top:17px"><span data-w="181">TP_(Zamanlayıcı)_komutunun_kullanımı</span></div>
<svg class="position-absolute" style="left:1253px;top:18px" width="20" height="16"><path d="M1 1h5v4H1zM8 1h5v4H8zM1 8h5v4H1zM8 10l4-4v3h5v3h-5v3z" fill="#fff"/></svg>
<div class="position-absolute credit"><span data-w="244">Hazırlayan: Fatih TUNCEL</span></div>

<div class="position-absolute dlg">
  <div class="dlg-title d-flex justify-content-between"><span class="ms-1" data-w="63">Rename tag</span><svg class="ic"><use href="#wx"/></svg></div>
  <div class="dlg-head d-flex" id="dlgHead"></div>
  <div class="dlg-row d-flex">
    <div class="in" style="width:98px;padding-left:2px;line-height:14px"><span data-w="32">MOTOR</span><span style="border-left:1px solid #111"></span></div>
    <div class="d-flex justify-content-between" style="width:99px;padding-left:4px"><span data-w="63">Global Output</span><div class="dd"><svg width="8" height="5"><path d="M0 0h8L4 5z" fill="#888"/></svg></div></div>
    <div style="width:41px;padding-left:4px"><span data-w="29">%Q0.0</span></div>
    <div class="d-flex justify-content-between" style="width:58px;padding-left:4px"><span data-w="20">Bool</span><div class="dd"><svg width="8" height="5"><path d="M0 0h8L4 5z" fill="#888"/></svg></div></div>
    <div class="d-flex justify-content-between" style="width:99px;padding-left:4px"><span data-w="75">Default tag table</span><div class="dd"><svg width="8" height="5"><path d="M0 0h8L4 5z" fill="#888"/></svg></div></div>
  </div>
  <div class="d-flex justify-content-end" style="gap:6px;padding:9px 9px 0 0"><div class="dbtn pri"><span data-w="34">Change</span></div><div class="dbtn"><span data-w="31">Cancel</span></div></div>
</div>
<svg class="position-absolute ov" style="left:1072px;top:422px" width="14" height="18"><path d="M1.500 1v13l3-3 2.500 5.500 2.500-1-2.500-5h4z" fill="#fff" stroke="#555"/></svg>

<svg class="position-absolute ov" style="left:1080px;top:538px" width="130" height="124" viewBox="150 294 390 372">
  <defs><pattern id="bars" width="10.900" height="10" patternUnits="userSpaceOnUse" x="448"><rect width="8" height="10" fill="#0d9b9c"/><rect x="8" width="2.900" height="10" fill="#9be3e2"/></pattern></defs>
  <path d="M380 319C340 303 305 301 270 305C200 313 160 355 162 408C165 465 212 494 260 515C300 532 316 545 315 567C310 600 265 604 235 600C208 596 185 585 172 578L157 640C190 655 230 660 270 658C350 655 397 610 397 550C395 488 345 458 300 441C260 426 235 412 236 393C240 363 290 358 325 366Q345 371 362 380Z" fill="#0d9b9c"/>
  <path d="M322 305v60M332 306v62M342 308v64M352 311v66M362 314v66M372 317v36M165 590v52M175 580v67M186 585v66M197 590v63M207 594v61M217 598v58" stroke="#a4dfdf" stroke-width="3"/>
  <path d="M448 310h74l-74 72z" fill="#0d9b9c"/><path d="M448 388l77-75v344h-77z" fill="url(#bars)"/>
</svg>

<svg class="position-absolute ov" style="left:0;top:686px" width="1280" height="34"><path d="M492 3.500H1272" stroke="#aaa" opacity=".6"/><path d="M14 4H492" stroke="#3d83bf" stroke-width="2.500"/><path d="M158 22h92M253 22h90M346 22h130" stroke="#666" stroke-width="2"/><path d="M480 23q4-7 12-7h298q8 1 14 7z" fill="#444"/><path d="M1249 22h12" stroke="#ddd"/><clipPath id="cc"><path d="M600 0h90v23h-90z"/></clipPath><g clip-path="url(#cc)"><circle cx="641" cy="23" r="14" fill="#7b97c8" stroke="#b6c2d8" stroke-width="1.500"/><path d="M638 19v8M644 19v8" stroke="#fff" stroke-width="3"/></g></svg>

<script src="https://cdn.jsdelivr.net/npm/bootstrap@5.3.0/dist/js/bootstrap.bundle.min.js"></script>
<script>
const $=id=>document.getElementById(id);
const icon=(n,extra='')=>`<svg class="ic" ${extra}><use href="#${n}"/></svg>`;
// Toolbars: [icon or "=label", centre or left edge, label width, class]
function toolbar(id,start,items){
  let x=start,h='';
  for(const [n,c,w,cls=''] of items){
    if(n[0]==='='){h+=`<span class="${cls}" style="margin-left:${c-x}px" data-w="${w}">${n.slice(1)}</span>`;x=c+w;}
    else if(n==='|'){h+=`<i style="margin-left:${c-x}px;width:1px;height:16px;background:#aaa"></i>`;x=c+1;}
    else{const s=16;h+=`<svg class="ic ${cls}" style="margin-left:${c-s/2-x}px"><use href="#${n}"/></svg>`;x=c+s/2;}
  }
  $(id).insertAdjacentHTML('beforeend',h);
}
toolbar('menu',8,[['=Project',18,31],['=Edit',63,17],['=View',94,22],['=Insert',129,26],['=Online',169,29],['=Options',213,34],['=Tools',262,22],['=Window',299,35],['=Help',348,20]]);
toolbar('mainTools',8,[['newp',26],['open',45],['save',63],['=Save project',74,54],['print',143],['|',154],['cut',166],['copy',186],['paste',206],['del',226],['|',237],['undo',248],['dng',261],['redo',277],['dng',290],['|',299],['comp',311],['down',331],['up',351],['sim',370],['rt',390],['|',402],['plug',412],['=Go online',424,43,'faint'],['plug',479],['=Go offline',490,44,'faint'],['|',541],['acc',554],['win',573],['win2',593],['|',604],['del',616],['|',628],['sph',640],['spv',660]]);
toolbar('projTools',28,[['newg',41],['back',60],['fwd',80],['grid',265],['exp',284]]);
toolbar('crumb',299,[['=Project2',304,42],['sep',356],['=PLC_1 [CPU 1214C DC/DC/DC]',368,155],['sep',533],['=Program blocks',544,80],['sep',635],['=Main [OB1]',646,60],['wmin',984],['rest',1000],['wmax',1015],['wx',1030]]);
toolbar('edTools',299,[['ins',311],['rem',331],['row',351],['row',371],['|',382],['cube',395],['|',406],['ln',419],['nb',438],['nc',458],['cmt',478,0,'ibtn'],['oper',496],['dn',510],['abs',526],['dn',540],['lst',556,0,'ibtn'],['lsg',575],['|',587],['gear1',599],['gear2',618],['st1',638],['st2',658],['chk',678],['|',689],['l1',701],['l2',722],['|',733],['mag',745],['glas',765],['|',777],['win',789],['paned',1020]]);
toolbar('searchTools',1145,[['bin',1159],['binu',1179],['pane',1230],['grid',1249]]);
const letter=l=>`<svg width="24" height="16"><path d="M1 8h5M7.500 5.500q-2.500 2.500 0 5M16.500 5.500q2.500 2.500 0 5M18 8h5" stroke="#111" stroke-width="1.600" fill="none"/><text x="9.500" y="10.500" font-size="7" fill="#222">${l}</text></svg>`;
const k=(n,w,c='#111')=>`<svg width="${w}" height="16" style="color:${c}"><use href="#${n}"/></svg>`;
const favs=c=>[k('k1',20),k('k2',22),k('k3',24,c),k('k4',16),k('k5',16),k('k6',16),letter('S'),letter('R')];
$('fav1').innerHTML=favs('#6b9299').map((s,i)=>`<div class="fav-cell ${i==2?'on':''}">${s}</div>`).join('');
$('fav2').innerHTML=favs('#111').map(s=>`<div class="fav-cell">${s}</div>`).join('');
// Project tree: [depth, expander, icon, label, width, class]
const tree=[[0,'v','page','Project2',36,'hd'],[1,'','add','Add new device',70],[1,'','neti','Devices & networks',87],[1,'v','plc','PLC_1 [CPU 1214C DC/DC/DC]',129,'hd'],[2,'','cfg','Device configuration',92],[2,'','diag','Online & diagnostics',92],[2,'v','fpb','Program blocks',68],[3,'','add','Add new block',65],[3,'','ob','Main [OB1]',49,'sel'],[3,'>','sys','System blocks',63],[2,'>','tech','Technology objects',85],[2,'>','ext','External source files',89],[2,'v','tags','PLC tags',37],[3,'','tagt','Show all tags',59],[3,'','add','Add new tag table',81],[3,'','tagd','Default tag table [18]',95],[2,'>','dty','PLC data types',64],[2,'>','watch','Watch and force tables',101],[2,'>','bak','Online backups',69],[2,'','info','Program info',57],[2,'>','proxy','Device proxy data',78],[2,'','txt','Text lists',37],[2,'>','lmod','Local modules',65]];
const ex=e=>`<svg width="10" height="10">${e==='v'?'<path d="M1.500 3h7L5 7z" fill="#111"/>':e==='>'?'<path d="M3 1v8l4-4z" fill="#111"/>':''}</svg>`;
$('tree').innerHTML=tree.map(([d,e,i,t,w,c=''])=>`<div class="tree-row d-flex align-items-center ${c}" style="padding-left:${3+d*14.8}px">${ex(e)}${icon(i,'style="margin:0 2px 0 1px"')}<span ${d==1&&e?'style="-webkit-text-stroke:.35px"':''} data-w="${w}">${t.replace('&','&amp;')}</span></div>`).join('');
$('details').innerHTML='<div class="tree-row" style="background:none;opacity:.6"></div>'.repeat(6);
// Instruction list: [expander, icon, glyph, label, width, description, width, class]
const ins=[['>','fold','','General',36],['>','fold','⊣','Bit logic operations',87],['v','fold','','',0],['','coil','','',0,'Generate ...',52,'hd'],['','coil','','',0,'Generate ...',52],['','coil','','',0,'Generate ...',52],['','coil','','',0,'Time acc...',47],['','coil','','–(TP)–',27,'Start puls...',44],['','coil','','–(TON)–',34,'Start on-...',45],['','coil','','–(TOF)–',33,'Start off-...',45],['','coil','','–(TONR)–',39,'Time acc...',46],['','coil','','–(RT)–',26,'Reset timer',51],['','coil','','–(PT)–',26,'Load tim...',46],['>','fold','+1','Counter operations',86],['>','fold','<','Comparator operations',103],['>','fold','±','Math functions',65],['>','fold','↷','Move operations',74],['>','fold','∿','Conversion operations',100]];
$('instr').innerHTML=ins.map(([e,i,g,t,w,d,dw,c=''])=>`<div class="tree-row d-flex align-items-center ${c}"><div class="d-flex align-items-center" style="width:152px;padding-left:${i==='coil'?17:2}px">${ex(e)}<svg class="ic" style="margin:0 ${i==='coil'?2:3}px 0 1px"><use href="#${i}"/><text x="8" y="12.500" font-size="8" font-weight="700" text-anchor="middle">${g.replace('<','&lt;')}</text></svg>${t?`<span data-w="${w}">${t}</span>`:''}</div>${d?`<span data-w="${dw}" style="margin-left:1px">${d}</span>`:''}</div>`).join('');
$('accs').innerHTML=[['Extended instructions',115],['Technology',61],['Communication',83],['Optional packages',99]].map(([t,w])=>`<div class="acc d-flex" style="height:19px"><div class="chev"><svg width="7" height="9"><path d="M1 1l4 3.500L1 8" fill="none" stroke="#111" stroke-width="2"/></svg></div><span data-w="${w}">${t}</span></div>`).join('');
$('dlgHead').innerHTML=[['Name',98,25,2],['Section',99,31,3],['Address',41,34,3],['Data type',58,41,2],['PLC tag table',99,56,3],['Comment',134,44,3]].map(([t,w,s,p])=>`<div style="width:${w}px;padding-left:${p}px"><span data-w="${s}">${t}</span></div>`).join('');
document.querySelectorAll('[data-w],[data-h]').forEach(e=>{
  const v='h' in e.dataset,t=+(e.dataset.w||e.dataset.h),r=document.createRange();
  r.selectNodeContents(e);const b=r.getBoundingClientRect(),n=v?b.height:b.width;
  e.style.letterSpacing=((t-n)/e.textContent.length).toFixed(3)+'px';
});
</script>
</body>
</html>
